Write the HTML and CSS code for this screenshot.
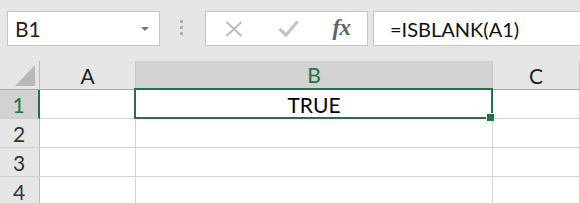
FILE: index.html
```html
<!DOCTYPE html>
<html>
<head>
<meta charset="utf-8">
<link rel="stylesheet" href="styles.css">
</head>
<body>
<div class="app">
  <div class="toolbar">
    <div class="namebox"><span class="ref">B1</span><span class="caret"></span></div>
    <div class="grip"><i></i><i></i><i></i></div>
    <div class="fbuttons">
      <span class="slot"><svg width="18" height="16" viewBox="0 0 18 16"><path d="M1.5 1 L16.5 15 M16.5 1 L1.5 15" stroke="#bdbdbd" stroke-width="2" fill="none"/></svg></span>
      <span class="slot"><svg width="21" height="17" viewBox="0 0 21 17"><path d="M1.5 9 L8 15 L19.5 1.5" stroke="#c4c4c4" stroke-width="3.2" fill="none"/></svg></span>
      <span class="slot fx">fx</span>
    </div>
    <div class="formula">=ISBLANK(A1)</div>
  </div>
  <div class="sheet">
    <div class="corner"><span class="tri"></span></div>
    <div class="colhead">A</div>
    <div class="colhead sel">B</div>
    <div class="colhead">C</div>

    <div class="rowhead sel">1</div>
    <div class="cell"></div>
    <div class="cell center">TRUE</div>
    <div class="cell"></div>

    <div class="rowhead">2</div>
    <div class="cell"></div>
    <div class="cell"></div>
    <div class="cell"></div>

    <div class="rowhead">3</div>
    <div class="cell"></div>
    <div class="cell"></div>
    <div class="cell"></div>

    <div class="rowhead">4</div>
    <div class="cell"></div>
    <div class="cell"></div>
    <div class="cell"></div>
  </div>
  <div class="selection"><span class="handle"></span></div>
</div>
</body>
</html>
```

FILE: styles.css
```css
* { box-sizing: border-box; }
html, body { margin: 0; padding: 0; }
body {
  width: 580px;
  height: 203px;
  overflow: hidden;
  background: #e6e6e6;
  font-family: "Lato", "Open Sans", sans-serif;
  color: #000;
}
.app {
  position: relative;
  width: 580px;
  height: 203px;
  overflow: hidden;
}
.toolbar {
  height: 61px;
  display: flex;
  align-items: flex-start;
  padding: 11px 0 0 7px;
  background: #e6e6e6;
}
.namebox {
  width: 153px;
  height: 35px;
  background: #fff;
  border: 1px solid #c6c6c6;
  display: flex;
  align-items: center;
  justify-content: space-between;
  padding: 0 10px 0 7px;
  font-size: 21px;
  color: #222;
}
.caret {
  width: 0;
  height: 0;
  border-left: 4px solid transparent;
  border-right: 4px solid transparent;
  border-top: 4px solid #777;
  margin-top: 1px;
}
.grip {
  margin-left: 20px;
  width: 3px;
  padding-top: 9px;
  display: flex;
  flex-direction: column;
  gap: 3px;
}
.grip i {
  display: block;
  width: 3px;
  height: 3px;
  background: #b3b3b3;
}
.fbuttons {
  margin-left: 22px;
  width: 163px;
  height: 35px;
  background: #fff;
  border: 1px solid #c6c6c6;
  display: flex;
  align-items: center;
}
.slot {
  width: 55px;
  display: flex;
  justify-content: center;
  align-items: center;
}
.slot.fx {
  width: 51px;
  font-family: "Liberation Serif", serif;
  font-style: italic;
  font-weight: bold;
  font-size: 23px;
  color: #636363;
  letter-spacing: -0.5px;
  padding-bottom: 2px;
}
.formula {
  margin-left: 5px;
  flex: 1;
  height: 35px;
  background: #fff;
  border: 1px solid #c6c6c6;
  border-right: none;
  display: flex;
  align-items: center;
  padding-left: 16px;
  font-size: 20px;
  color: #111;
}
.sheet {
  display: grid;
  grid-template-columns: 40px 96px 357px 1fr;
  grid-auto-rows: 29px;
}
.corner {
  background: #e6e6e6;
  border-right: 1px solid #bdbdbd;
  border-bottom: 1px solid #ababab;
  position: relative;
}
.tri {
  position: absolute;
  right: 4px;
  bottom: 3px;
  width: 0;
  height: 0;
  border-left: 20px solid transparent;
  border-bottom: 21px solid #b9b9b9;
}
.colhead {
  background: #e6e6e6;
  border-right: 1px solid #c6c6c6;
  border-bottom: 1px solid #ababab;
  display: flex;
  align-items: center;
  justify-content: center;
  font-size: 21px;
  color: #222;
}
.colhead.sel {
  background: #d2d2d2;
  color: #217346;
  border-bottom: 2px solid #217346;
}
.rowhead {
  background: #e6e6e6;
  border-right: 1px solid #bdbdbd;
  border-bottom: 1px solid #cfcfcf;
  display: flex;
  align-items: center;
  justify-content: center;
  font-size: 21px;
  color: #333;
  padding-right: 1px;
}
.rowhead.sel {
  background: #d2d2d2;
  color: #217346;
  border-right: 2px solid #217346;
}
.cell {
  background: #fff;
  border-right: 1px solid #d4d4d4;
  border-bottom: 1px solid #d4d4d4;
  font-size: 21px;
  display: flex;
  align-items: center;
}
.cell.center { justify-content: center; }
.selection {
  position: absolute;
  left: 134px;
  top: 88px;
  width: 359px;
  height: 31px;
  border: 2px solid #217346;
}
.handle {
  position: absolute;
  left: 350px;
  top: 23px;
  width: 9px;
  height: 9px;
  background: #217346;
  border: 1px solid #fff;
}
```
